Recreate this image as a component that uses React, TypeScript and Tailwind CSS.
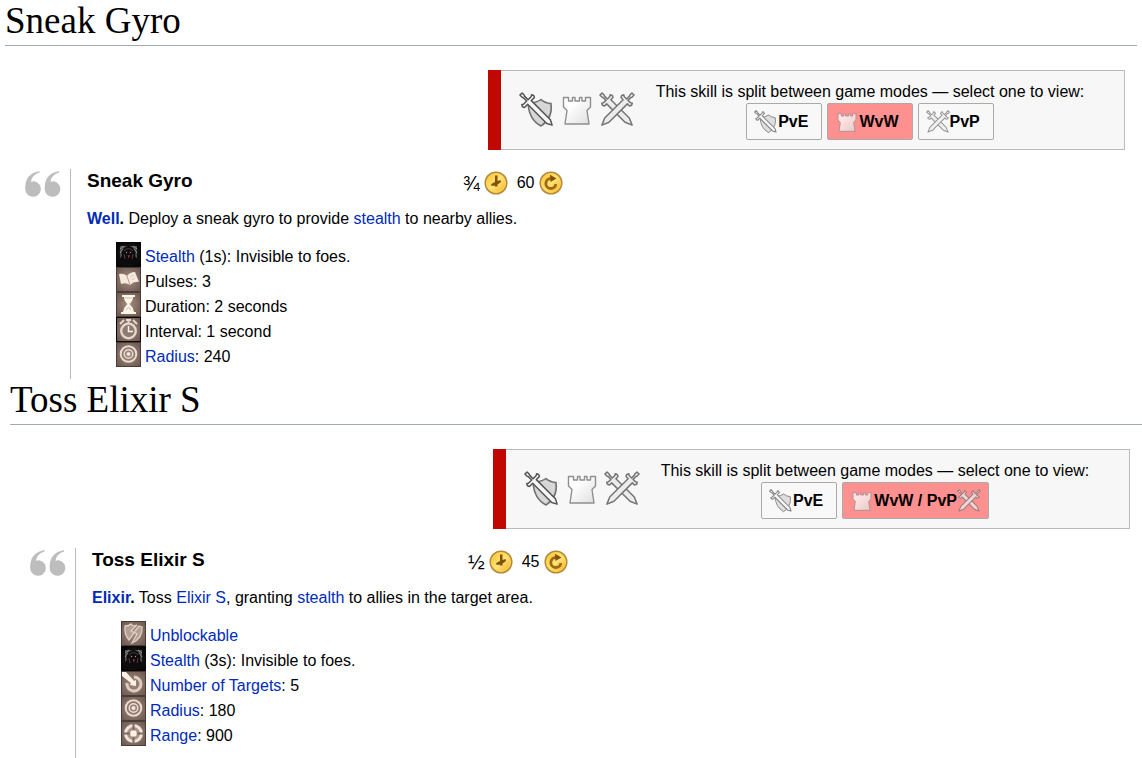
import React, { useId, useState } from "react";

type P = { className?: string };

const swordPath =
  "M0 -1.500 H3 L4 -1 H9 V-5.500 L8 -7 L10 -8 L12 -7 V-2.600 H39 L44 0 L39 2.600 H12 V7 L10 8 L8 7 L9 5.500 V1 H4 L3 1.500 H0Z";

function SwordShield({ className }: P) {
  return (
    <svg viewBox="0 0 36 36" className={className} aria-hidden="true">
      <path d="M9 11 Q17 11 22 7.500 Q26 11 32 11.500 Q34 26 22 34 Q10 28 9 11Z" fill="#c9c9c9" stroke="#6e6e6e" strokeWidth="1.500" />
      <path d="M11 13 Q18 13 22 10 Q26 13 30 13.500 Q31 24 22 31.500 Q12 26 11 13Z" fill="#d6d6d6" stroke="#e2e2e2" strokeWidth=".8" />
      <path d={swordPath} transform="translate(2 2) rotate(45)" fill="#f6f6f6" stroke="#555" strokeWidth="1.500" strokeLinejoin="round" />
    </svg>
  );
}

function Tower({ className }: P) {
  const id = useId();
  return (
    <svg viewBox="0 0 36 36" className={className} aria-hidden="true">
      <defs>
        <linearGradient id={id} x1="0" y1="0" x2="1" y2="1">
          <stop offset="0.3" stopColor="#fff" />
          <stop offset="1" stopColor="#dedede" />
        </linearGradient>
      </defs>
      <path d="M4.500 5.500 H9.500 V9 H13.500 V5.500 H16 V9 H20.500 V5.500 H23 V9 H26.500 V5.500 H31.500 V15 L28 18.500 L30 32 H6 L8 18.500 L4.500 15Z" fill={`url(#${id})`} stroke="#8f8f8f" strokeWidth="1.400" strokeLinejoin="round" />
    </svg>
  );
}

function Swords({ className }: P) {
  const blade =
    "M0 -1.500 H3 L4 -1 H8 V-4.500 L7 -6 L9 -7 L11 -6 V-3 H37 L44 0 L37 3 H11 V6 L9 7 L7 6 L8 4.500 V1 H4 L3 1.500 H0Z";
  return (
    <svg viewBox="0 0 36 36" className={className} aria-hidden="true">
      <g fill="#ececec" stroke="#757575" strokeWidth="1.500" strokeLinejoin="round">
        <path d={blade} transform="translate(2 2) rotate(45)" />
        <path d={blade} transform="translate(34 2) rotate(135)" />
      </g>
    </svg>
  );
}

function Coin({ kind }: { kind: "cast" | "recharge" }) {
  const id = useId();
  return (
    <svg viewBox="0 0 24 24" className="size-6" role="img" aria-label={kind === "cast" ? "Activation time" : "Recharge time"}>
      <defs>
        <linearGradient id={id} x1="0" y1="0" x2="1" y2="1">
          <stop offset="0" stopColor="#ffb91e" />
          <stop offset="0.5" stopColor="#ffe47a" />
          <stop offset="1" stopColor="#f2a818" />
        </linearGradient>
      </defs>
      <circle cx="12" cy="12" r="10.800" fill={`url(#${id})`} stroke="#b58a3c" strokeWidth="1.500" />
      <circle cx="12" cy="12" r="9.300" fill="none" stroke="#ffd850" strokeWidth="1" />
      {kind === "cast" ? (
        <path d="M11 4.500 H13.500 V10 L16.500 9 L17 11 L13.500 13.500 V15.500 H10.800 V14.500 L7.500 15 L7.200 13 L11 11Z" fill="#80520a" />
      ) : (
        <>
          <path d="M16.800 13 A5 5 0 1 1 12 7.500" fill="none" stroke="#a06a12" strokeWidth="2.800" />
          <path d="M11 3.800 L17.500 7.500 L11.500 11Z" fill="#80520a" />
        </>
      )}
    </svg>
  );
}

type FactKind = "stealth" | "pulses" | "duration" | "interval" | "radius" | "unblockable" | "targets" | "range";

const drawings: Record<FactKind, React.ReactNode> = {
  stealth: (
    <>
      <path d="M4 4 H21 V16 H4Z" fill="#4d4b4b" />
      <path d="M4 7 L8 4 M4 11 L7 7 M21 7 L17 4 M21 11 L18 7" stroke="#969292" />
      <path d="M4 22 V16 L6 14 L5.500 10 L8 6 L12.500 3.500 L17 6 L19.500 10 L19 14 L21 17 V22Z" fill="#0c0a0b" />
      <path d="M8 9 Q12.500 4 17 9 M8 12 L9 17 M17 12 L16 17" fill="none" stroke="#484044" />
      <circle cx="10.500" cy="10.500" r=".7" fill="#a49494" />
      <circle cx="14.500" cy="10.500" r=".7" fill="#a49494" />
      <path d="M11.500 13 L14 13.500 L12.800 16.500Z" fill="#9d3636" />
    </>
  ),
  pulses: (
    <>
      <path d="M3 7 Q8 6 11 9 Q14 5 19 5 L23 15 Q18 14 14 18 Q10 15 5 17Z" fill="#f5e9dd" />
      <path d="M11 9 L14 18" stroke="#b59c8e" />
      <path d="M14 10 L18 8 M15 13 L19 11" stroke="#dccabe" />
    </>
  ),
  duration: (
    <>
      <path d="M6 3 H19 V5 H17 Q17 9 13.500 12 Q17 15 18 20 H20 V22 H5 V20 H7 Q8 15 11.500 12 Q8 9 8 5 H6Z" fill="#fff4e8" />
      <path d="M9 6 H16 M10 18 L12.500 15 L15 18" stroke="#cdb8a7" fill="none" />
    </>
  ),
  interval: (
    <>
      <circle cx="12.500" cy="14" r="7.300" fill="#8d7a70" stroke="#e6d6cb" strokeWidth="2.300" />
      <path d="M4 7 L8 3 M21 7 L17 3 M10 3 H15 M12.500 3 V6" stroke="#e6d6cb" strokeWidth="2" />
      <path d="M12.500 9 V14.500 H17" fill="none" stroke="#fff1e5" strokeWidth="1.500" />
    </>
  ),
  radius: (
    <g fill="none" stroke="#eadbd0">
      <circle cx="12.500" cy="12" r="7.800" strokeWidth="2" />
      <circle cx="12.500" cy="12" r="4.300" strokeWidth="1.500" />
      <circle cx="12.500" cy="12" r="1.600" fill="#fff1e8" />
    </g>
  ),
  unblockable: (
    <>
      <path d="M4 5 Q8 5 10 3 Q12 6 16 4 L10 10 L13 12 L8 19 Q3 13 4 5Z" fill="#b5a095" stroke="#dfcfc5" strokeWidth="1.300" />
      <path d="M18 5 L21 6 Q22 17 11 22 L16 13 L13 11Z" fill="#b5a095" stroke="#dfcfc5" strokeWidth="1.300" />
    </>
  ),
  targets: (
    <>
      <path d="M6 12 A7 7 0 1 0 13 6" fill="none" stroke="#dfcdc1" strokeWidth="3" />
      <path d="M1 1 L5 1 L13 10 L15 9 L15 15 L9 14 L10 12 L1 5Z" fill="#fff2e5" />
    </>
  ),
  range: (
    <>
      <circle cx="12.500" cy="12.500" r="8" fill="#a8948a" stroke="#f1e3d9" strokeWidth="3" />
      <path d="M12.500 3 V22 M3 12.500 H22" stroke="#7d685f" strokeWidth="2" />
      <circle cx="12.500" cy="12.500" r="3.300" fill="#fff0e5" />
    </>
  ),
};

function FactIcon({ kind }: { kind: FactKind }) {
  const id = useId();
  const dark = kind === "stealth";
  return (
    <svg viewBox="0 0 25 25" className="size-[25px] shrink-0" aria-hidden="true">
      <defs>
        <radialGradient id={id} r=".7">
          <stop offset="0" stopColor={dark ? "#242223" : "#a58e83"} />
          <stop offset="1" stopColor={dark ? "#000" : "#65524a"} />
        </radialGradient>
      </defs>
      <rect width="25" height="25" fill={`url(#${id})`} />
      {drawings[kind]}
      <rect x=".5" y=".5" width="24" height="24" fill="none" stroke={dark || kind === "interval" ? "#080606" : "#4a3d37"} />
    </svg>
  );
}

function Link({ children }: { children: React.ReactNode }) {
  return <a href="#" className="text-[#002bb8] hover:underline">{children}</a>;
}

type Mode = { id: string; label: string; before: React.ReactNode; after?: React.ReactNode };

const small = "size-6 shrink-0 opacity-75";
const pve: Mode = { id: "pve", label: "PvE", before: <SwordShield className={small} /> };

const splitModes: Mode[] = [
  pve,
  { id: "wvw", label: "WvW", before: <Tower className={small} /> },
  { id: "pvp", label: "PvP", before: <Swords className={small} /> },
];

const sharedModes: Mode[] = [
  pve,
  { id: "wvw", label: "WvW / PvP", before: <Tower className={small} />, after: <Swords className={small} /> },
];

function ModeBanner({ modes }: { modes: Mode[] }) {
  const [active, setActive] = useState("wvw");
  return (
    <div className="mr-3 ml-auto flex h-20 w-fit">
      <div className="w-[13px] bg-[#c00800]" />
      <div className="flex items-center border border-l-0 border-[#bbb] bg-[#f7f7f7] pr-[37px] pl-[18px]">
        <div className="mr-[18px] flex items-center gap-1">
          <SwordShield className="size-9" />
          <Tower className="size-9" />
          <Swords className="size-9" />
        </div>
        <div className="flex min-w-[434px] flex-col items-center">
          <p className="leading-[23px]">This skill is split between game modes — select one to view:</p>
          <div className="flex gap-[5px]">
            {modes.map((m) => (
              <button
                key={m.id}
                type="button"
                aria-pressed={active === m.id}
                onClick={() => setActive(m.id)}
                className={`flex h-[37px] items-center rounded-xs border border-[#aaa] pl-[7px] font-bold ${m.after ? "pr-[7px]" : "pr-[13px]"} ${active === m.id ? "bg-[#ff9090]" : "bg-[#f8f8f8]"}`}
              >
                {m.before}
                {m.label}
                {m.after}
              </button>
            ))}
          </div>
        </div>
      </div>
    </div>
  );
}

type Fact = { icon: FactKind; link?: string; text: string };

type SkillProps = {
  name: string;
  cast: string;
  recharge: string;
  modes: Mode[];
  facts: Fact[];
  className: string;
  children: React.ReactNode;
};

function Skill({ name, cast, recharge, modes, facts, className, children }: SkillProps) {
  return (
    <section className={className}>
      <h1 className="mb-6 h-[46px] border-b border-[#a2a9b1] font-['Liberation_Serif',serif] text-[37px] leading-[42px]">{name}</h1>
      <ModeBanner modes={modes} />
      <div className="mt-[19px] flex">
        <svg viewBox="0 0 36 28" className="mt-[2px] mr-[9px] ml-5 h-7 w-9" fill="#bdbdbd" aria-hidden="true">
          <path d="M14.500 0 V1.500 Q6.500 4 6 11 Q8 10 10 10.500 A7.800 7.800 0 1 1 .2 18 Q-.5 3 14.500 0Z" />
          <path d="M34 0 V1.500 Q26 4 25.500 11 Q27.500 10 29.500 10.500 A7.800 7.800 0 1 1 19.700 18 Q19 3 34 0Z" />
        </svg>
        <div className="grow border-l border-[#bbb] pb-3 pl-4">
          <div className="flex h-7 items-center">
            <h2 className="w-[376px] pb-1 text-[19px] leading-6 font-bold">{name}</h2>
            <span className="mr-1 text-xl leading-6">{cast}</span>
            <Coin kind="cast" />
            <span className="mr-[5px] ml-[9px]">{recharge}</span>
            <Coin kind="recharge" />
          </div>
          <p className="mt-[10px] leading-6">{children}</p>
          <ul className="mt-[11px] ml-[29px]">
            {facts.map((f) => (
              <li key={f.icon} className="flex h-[25px] items-center gap-1">
                <FactIcon kind={f.icon} />
                <span className="pt-1 leading-6">
                  {f.link && <Link>{f.link}</Link>}
                  {f.text}
                </span>
              </li>
            ))}
          </ul>
        </div>
      </div>
    </section>
  );
}

export default function App() {
  return (
    <main className="min-h-screen bg-white font-['Liberation_Sans',Arial,sans-serif] text-base text-black">
      <Skill
        name="Sneak Gyro"
        cast="¾"
        recharge="60"
        modes={splitModes}
        className="ml-[5px] pr-[5px]"
        facts={[
          { icon: "stealth", link: "Stealth", text: " (1s): Invisible to foes." },
          { icon: "pulses", text: "Pulses: 3" },
          { icon: "duration", text: "Duration: 2 seconds" },
          { icon: "interval", text: "Interval: 1 second" },
          { icon: "radius", link: "Radius", text: ": 240" },
        ]}
      >
        <b><Link>Well</Link>.</b> Deploy a sneak gyro to provide <Link>stealth</Link> to nearby allies.
      </Skill>
      <Skill
        name="Toss Elixir S"
        cast="½"
        recharge="45"
        modes={sharedModes}
        className="ml-[10px]"
        facts={[
          { icon: "unblockable", link: "Unblockable", text: "" },
          { icon: "stealth", link: "Stealth", text: " (3s): Invisible to foes." },
          { icon: "targets", link: "Number of Targets", text: ": 5" },
          { icon: "radius", link: "Radius", text: ": 180" },
          { icon: "range", link: "Range", text: ": 900" },
        ]}
      >
        <b><Link>Elixir</Link>.</b> Toss <Link>Elixir S</Link>, granting <Link>stealth</Link> to allies in the target area.
      </Skill>
    </main>
  );
}
